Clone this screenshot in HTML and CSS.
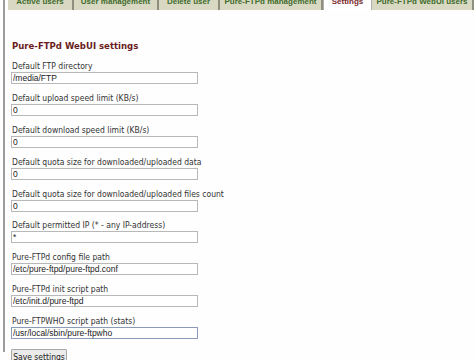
FILE: index.html
```html
<!DOCTYPE html>
<html>
<head>
<meta charset="utf-8">
<link rel="stylesheet" href="styles.css">
</head>
<body>
<div class="page">
  <ul class="tabs">
    <li class="tab t1">Active users</li>
    <li class="tab t2">User management</li>
    <li class="tab t3">Delete user</li>
    <li class="tab t4">Pure-FTPd management</li>
    <li class="tab t5 active">Settings</li>
    <li class="tab t6">Pure-FTPd WebUI users</li>
  </ul>
  <div class="content">
    <h2 class="title">Pure-FTPd WebUI settings</h2>
    <form class="form">
      <div class="field"><label class="label">Default FTP directory</label><input class="input" type="text" value="/media/FTP"></div>
      <div class="field"><label class="label">Default upload speed limit (KB/s)</label><input class="input" type="text" value="0"></div>
      <div class="field"><label class="label">Default download speed limit (KB/s)</label><input class="input" type="text" value="0"></div>
      <div class="field"><label class="label">Default quota size for downloaded/uploaded data</label><input class="input" type="text" value="0"></div>
      <div class="field"><label class="label">Default quota size for downloaded/uploaded files count</label><input class="input" type="text" value="0"></div>
      <div class="field"><label class="label">Default permitted IP (* - any IP-address)</label><input class="input" type="text" value="*"></div>
      <div class="field"><label class="label">Pure-FTPd config file path</label><input class="input" type="text" value="/etc/pure-ftpd/pure-ftpd.conf"></div>
      <div class="field"><label class="label">Pure-FTPd init script path</label><input class="input" type="text" value="/etc/init.d/pure-ftpd"></div>
      <div class="field"><label class="label">Pure-FTPWHO script path (stats)</label><input class="input focused" type="text" value="/usr/local/sbin/pure-ftpwho"></div>
      <button class="btn" type="button">Save settings</button>
    </form>
  </div>
</div>
</body>
</html>
```
FILE: styles.css
```css
html, body {
  margin: 0;
  padding: 0;
  background: #fefefe;
  overflow: hidden;
}
body {
  width: 474px;
  height: 360px;
  padding-left: 3px;
  box-sizing: border-box;
}
.page {
  border-left: 2px solid #9c9c9c;
  height: 360px;
  box-sizing: border-box;
  font-family: "DejaVu Sans Condensed", "DejaVu Sans", sans-serif;
}
.tabs {
  list-style: none;
  margin: -8px 0 0 3px;
  padding: 0;
  display: flex;
  height: 18px;
}
.tab {
  box-sizing: border-box;
  height: 18px;
  background: #d9d9c3;
  color: #3f6b2b;
  font-family: "Liberation Sans", sans-serif;
  font-weight: bold;
  font-size: 8px;
  text-align: center;
  line-height: 20px;
  border-right: 2px solid #8f8f80;
  white-space: nowrap;
  overflow: hidden;
}
.t1 { width: 66px; }
.t2 { width: 85px; }
.t3 { width: 61px; }
.t4 { width: 103px; }
.t5 { width: 49px; }
.t6 { flex: 1; }
.tab.active {
  background: #ffffff;
  color: #7a2a2a;
  border-left: 1px solid #b0b0b0;
  border-right: 1px solid #b0b0b0;
}
.content {
  padding: 30px 0 0 6px;
}
.title {
  margin: 0 0 9px 1px;
  font-size: 9.5px;
  line-height: 12px;
  font-weight: bold;
  color: #6b1c1c;
}
.form {
  display: flex;
  flex-direction: column;
}
.field {
  display: flex;
  flex-direction: column;
  align-items: flex-start;
  height: 31.9px;
}
.label {
  font-size: 8.5px;
  line-height: 11px;
  color: #333;
  padding-left: 1px;
}
.input {
  box-sizing: border-box;
  width: 187px;
  height: 12px;
  margin: 0;
  padding: 0 1px;
  border: 1px solid #b8b8b8;
  background: #fff;
  font-family: "Liberation Sans", sans-serif;
  font-size: 8.5px;
  color: #222;
  outline: none;
}
.input.focused {
  border-color: #8a9ab8;
}
.btn {
  align-self: flex-start;
  margin: 1px 0 0 0;
  height: 15px;
  width: 56px;
  padding: 0;
  box-sizing: border-box;
  border: 1px solid #a8a8a8;
  background: #ebebeb;
  font-family: "DejaVu Sans Condensed", "DejaVu Sans", sans-serif;
  font-size: 8.5px;
  color: #222;
  border-radius: 1px;
}
```
